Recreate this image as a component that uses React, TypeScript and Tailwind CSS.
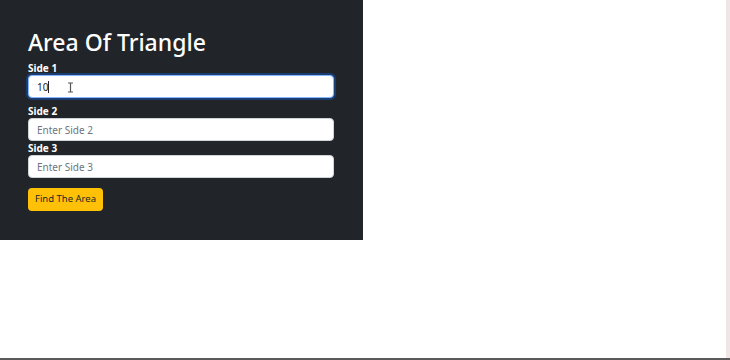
import React from 'react'

const font = { fontFamily: '"Noto Sans", "Open Sans", Arial, sans-serif' }

function Field({ label, placeholder, value, focused, className }: { label: string; placeholder: string; value?: string; focused?: boolean; className?: string }) {
  return (
    <div className={'flex flex-col ' + (className ?? '')}>
      <label className="text-[10px] font-bold leading-[13px] text-white">{label}</label>
      <div className="relative">
        <input
          readOnly
          value={value ?? ''}
          placeholder={placeholder}
          className={
            focused
              ? 'block h-[23px] w-[306px] rounded-[4px] border border-[#86b7fe] bg-white px-[8px] text-[10px] text-[#212529] shadow-[0_0_0_2px_rgba(13,110,253,0.35)] outline-none'
              : 'block h-[23px] w-[306px] rounded-[4px] border border-[#ced4da] bg-white px-[8px] text-[10px] text-[#212529] outline-none placeholder:text-[#6c757d]'
          }
        />
        {focused && (
          <>
            <span className="absolute left-[20px] top-[6px] h-[12px] w-px bg-[#212529]" />
            <svg className="absolute left-[39px] top-[7px]" width="7" height="11" viewBox="0 0 7 11">
              <path d="M1 1h5M3.5 1v9M1 10h5" stroke="#555" strokeWidth="1.2" fill="none" />
            </svg>
          </>
        )}
      </div>
    </div>
  )
}

export default function App() {
  return (
    <div className="flex h-[360px] w-[730px] flex-col bg-white" style={font}>
      <div className="flex flex-1">
        <div className="flex-1">
          <div className="flex h-[240px] w-[363px] flex-col bg-[#212529] pl-[28px] pt-[27px]">
            <h2 className="text-[23px] font-medium leading-[30px] text-white">Area Of Triangle</h2>
            <div className="mt-[5px] flex flex-col">
              <Field label="Side 1" placeholder="Enter Side 1" value="10" focused />
              <Field className="mt-[7px]" label="Side 2" placeholder="Enter Side 2" />
              <Field className="mt-[1px]" label="Side 3" placeholder="Enter Side 3" />
            </div>
            <button className="mt-[10px] h-[23px] w-[75px] rounded-[4px] bg-[#ffc107] text-[9.5px] text-[#212529]">
              Find The Area
            </button>
          </div>
        </div>
        <div className="w-[4px] bg-[#efe6e6]" />
      </div>
      <div className="h-[2px] bg-[#5a5a5a]" />
    </div>
  )
}
